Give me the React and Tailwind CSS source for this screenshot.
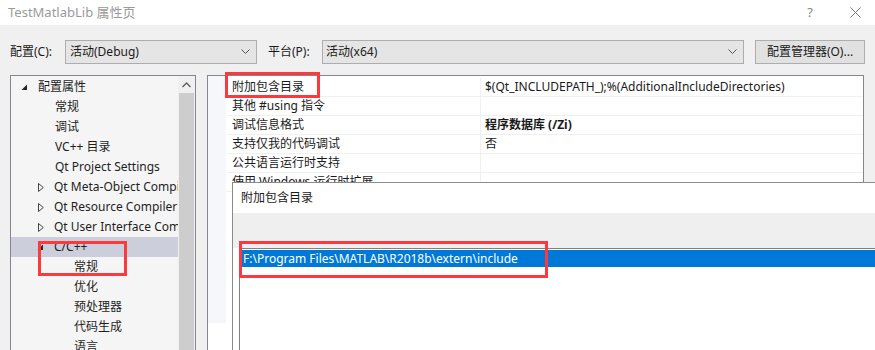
import React from "react";

const FONT = { fontFamily: '"Segoe UI","Noto Sans","Noto Sans CJK SC",sans-serif' };

function Expanded() {
  return (
    <svg width="7" height="7" viewBox="0 0 7 7" className="shrink-0">
      <polygon points="6,0.5 6,6 0.5,6" fill="#262626" />
    </svg>
  );
}
function Collapsed() {
  return (
    <svg width="6" height="9" viewBox="0 0 6 9" className="shrink-0">
      <polygon points="0.5,0.5 5.3,4.5 0.5,8.5" fill="none" stroke="#444" strokeWidth="1" />
    </svg>
  );
}
function Chevron() {
  return (
    <svg width="9" height="6" viewBox="0 0 9 6">
      <polyline points="0.5,0.5 4.5,4.5 8.5,0.5" fill="none" stroke="#555" strokeWidth="1" />
    </svg>
  );
}

function TreeRow({ indent, icon, label, selected }) {
  return (
    <div className={"flex h-[20px] items-center " + (selected ? "bg-[#cccedb]" : "")}>
      <div style={{ width: indent }} className="flex shrink-0 items-center justify-end">
        {icon}
      </div>
      <span className={"whitespace-nowrap " + (icon ? "ml-[10px]" : "")}>{label}</span>
    </div>
  );
}

function PropRow({ name, value, bold }) {
  return (
    <div className="flex h-[19px] items-center border-b border-[#f0f0f0]">
      <div className="w-[254px] shrink-0 pl-[6px] whitespace-nowrap">{name}</div>
      <div className={"flex h-full items-center border-l border-[#f0f0f0] pl-[4px] whitespace-nowrap " + (bold ? "font-bold" : "")}>{value}</div>
    </div>
  );
}

export default function App() {
  return (
    <div style={FONT} className="relative h-[350px] w-[875px] overflow-hidden bg-[#f0f0f0] text-[12px] text-[#1a1a1a]">
      {/* title bar */}
      <div className="flex h-[25px] items-center bg-white pl-[8px] pr-[10px] text-[13px] text-[#9a9a9a]">
        <span>TestMatlabLib 属性页</span>
        <span className="ml-auto mr-[37px] text-[13px] text-[#888]">?</span>
        <svg width="11" height="11" viewBox="0 0 11 11" className="mr-[4px]">
          <path d="M0.5 0.5 L10.5 10.5 M10.5 0.5 L0.5 10.5" stroke="#777" strokeWidth="1" />
        </svg>
      </div>

      {/* config row */}
      <div className="mt-[15px] flex h-[24px] items-center pl-[10px]">
        <span className="w-[55px] whitespace-nowrap">配置(C):</span>
        <div className="flex h-[24px] w-[192px] items-center border border-[#adadad] bg-[#e5e5e5] pl-[4px] pr-[6px]">
          <span>活动(Debug)</span>
          <span className="ml-auto"><Chevron /></span>
        </div>
        <span className="ml-[11px] w-[54px] shrink-0 whitespace-nowrap">平台(P):</span>
        <div className="flex h-[24px] w-[422px] items-center border border-[#adadad] bg-[#e5e5e5] pl-[3px] pr-[6px]">
          <span>活动(x64)</span>
          <span className="ml-auto"><Chevron /></span>
        </div>
        <div className="ml-[11px] flex h-[24px] w-[110px] items-center justify-center border border-[#adadad] bg-[#e1e1e1]">
          配置管理器(O)...
        </div>
      </div>

      {/* main */}
      <div className="mt-[11px] flex h-[300px] pl-[10px]">
        {/* tree */}
        <div className="flex h-full w-[186px] border border-[#828790] bg-[#f5f5f5]">
          <div className="min-w-0 flex-1 overflow-hidden pt-[1px] text-[#1e1e1e]">
            <TreeRow indent={17} icon={<Expanded />} label="配置属性" />
            <TreeRow indent={44} label="常规" />
            <TreeRow indent={44} label="调试" />
            <TreeRow indent={44} label="VC++ 目录" />
            <TreeRow indent={44} label="Qt Project Settings" />
            <TreeRow indent={33} icon={<Collapsed />} label="Qt Meta-Object Compiler" />
            <TreeRow indent={33} icon={<Collapsed />} label="Qt Resource Compiler" />
            <TreeRow indent={33} icon={<Collapsed />} label="Qt User Interface Compiler" />
            <TreeRow indent={33} icon={<Expanded />} label="C/C++" selected />
            <TreeRow indent={63} label="常规" />
            <TreeRow indent={63} label="优化" />
            <TreeRow indent={63} label="预处理器" />
            <TreeRow indent={63} label="代码生成" />
            <TreeRow indent={63} label="语言" />
          </div>
          {/* scrollbar */}
          <div className="flex w-[17px] shrink-0 flex-col bg-[#f0f0f0]">
            <div className="flex h-[17px] items-center justify-center">
              <svg width="9" height="6" viewBox="0 0 9 6">
                <polyline points="0.5,5 4.5,1 8.5,5" fill="none" stroke="#606060" strokeWidth="1.4" />
              </svg>
            </div>
            <div className="mx-[1px] flex-1 bg-[#cdcdcd]" />
          </div>
        </div>
        <div className="w-[11px]" />
        {/* property grid */}
        <div className="flex h-full w-[657px] border border-[#828790] bg-white">
          <div className="flex w-[18px] shrink-0 flex-col">
            <div className="h-[247px] bg-[#f5f7fa]" />
            <div className="flex-1 bg-white" />
          </div>
          <div className="flex-1 pt-[2px]">
            <PropRow name="附加包含目录" value="$(Qt_INCLUDEPATH_);%(AdditionalIncludeDirectories)" />
            <PropRow name="其他 #using 指令" value="" />
            <PropRow name="调试信息格式" value="程序数据库 (/Zi)" bold />
            <PropRow name="支持仅我的代码调试" value="否" />
            <PropRow name="公共语言运行时支持" value="" />
            <PropRow name="使用 Windows 运行时扩展" value="" />
          </div>
        </div>
      </div>

      {/* dialog (overlays the page) */}
      <div className="absolute left-[232px] top-[182px] h-[180px] w-[660px] border border-[#8a8a8a] bg-white">
        <div className="flex h-[30px] items-center pl-[8px]">附加包含目录</div>
        <div className="h-[35px] bg-[#efefef]" />
        <div className="ml-[6px] h-[120px] border-l border-t border-[#828282] pt-[1px]">
          <div className="flex h-[17px] items-center bg-[#0078d7] pl-[3px] text-white">
            F:\Program Files\MATLAB\R2018b\extern\include
          </div>
        </div>
      </div>

      {/* red annotation boxes */}
      <div className="absolute left-[38px] top-[241px] h-[35px] w-[89px] border-[3px] border-[#fc3a3e]" />
      <div className="absolute left-[225px] top-[72px] h-[26px] w-[95px] border-[3px] border-[#fc3a3e]" />
      <div className="absolute left-[239px] top-[241px] h-[37px] w-[309px] border-[3px] border-[#fc3a3e]" />
    </div>
  );
}
